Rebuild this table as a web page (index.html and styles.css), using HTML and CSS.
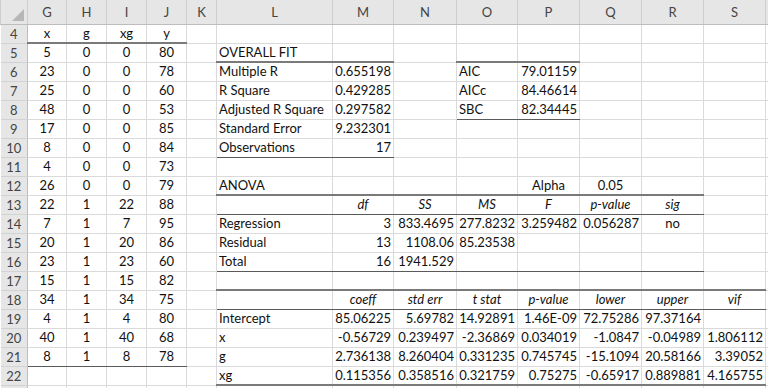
FILE: index.html
```html
<!DOCTYPE html>
<html>
<head>
<meta charset="utf-8">
<link rel="stylesheet" href="styles.css">
</head>
<body>
<table class="sheet">
<colgroup>
<col class="w-rh"><col class="w-g"><col class="w-h"><col class="w-i"><col class="w-j"><col class="w-k"><col class="w-l"><col class="w-m"><col class="w-n"><col class="w-o"><col class="w-p"><col class="w-q"><col class="w-r"><col class="w-s"><col class="w-t">
</colgroup>
<tr class="hdr">
<th class="corner"><span class="tri"></span></th><th>G</th><th>H</th><th>I</th><th>J</th><th>K</th><th>L</th><th>M</th><th>N</th><th>O</th><th>P</th><th>Q</th><th>R</th><th>S</th><th></th>
</tr>
<tr><th class="rh">4</th><td class="c tk">x</td><td class="c tk">g</td><td class="c tk">xg</td><td class="c tk">y</td><td></td><td></td><td></td><td></td><td></td><td></td><td></td><td></td><td></td><td></td></tr>
<tr><th class="rh">5</th><td class="c">5</td><td class="c">0</td><td class="c">0</td><td class="c">80</td><td></td><td class="l tk">OVERALL FIT</td><td class="tk"></td><td></td><td class="tk"></td><td class="tk"></td><td></td><td></td><td></td><td></td></tr>
<tr><th class="rh">6</th><td class="c">23</td><td class="c">0</td><td class="c">0</td><td class="c">78</td><td></td><td class="l">Multiple R</td><td class="r">0.655198</td><td></td><td class="l">AIC</td><td class="r">79.01159</td><td></td><td></td><td></td><td></td></tr>
<tr><th class="rh">7</th><td class="c">25</td><td class="c">0</td><td class="c">0</td><td class="c">60</td><td></td><td class="l">R Square</td><td class="r">0.429285</td><td></td><td class="l">AICc</td><td class="r">84.46614</td><td></td><td></td><td></td><td></td></tr>
<tr><th class="rh">8</th><td class="c">48</td><td class="c">0</td><td class="c">0</td><td class="c">53</td><td></td><td class="l">Adjusted R Square</td><td class="r">0.297582</td><td></td><td class="l tn">SBC</td><td class="r tn">82.34445</td><td></td><td></td><td></td><td></td></tr>
<tr><th class="rh">9</th><td class="c">17</td><td class="c">0</td><td class="c">0</td><td class="c">85</td><td></td><td class="l">Standard Error</td><td class="r">9.232301</td><td></td><td></td><td></td><td></td><td></td><td></td><td></td></tr>
<tr><th class="rh">10</th><td class="c">8</td><td class="c">0</td><td class="c">0</td><td class="c">84</td><td></td><td class="l tn">Observations</td><td class="r tn">17</td><td></td><td></td><td></td><td></td><td></td><td></td><td></td></tr>
<tr><th class="rh">11</th><td class="c">4</td><td class="c">0</td><td class="c">0</td><td class="c">73</td><td></td><td></td><td></td><td></td><td></td><td></td><td></td><td></td><td></td><td></td></tr>
<tr><th class="rh">12</th><td class="c">26</td><td class="c">0</td><td class="c">0</td><td class="c">79</td><td></td><td class="l tk">ANOVA</td><td class="tk"></td><td class="tk"></td><td class="tk"></td><td class="c tk">Alpha</td><td class="c tk">0.05</td><td class="tk"></td><td></td><td></td></tr>
<tr><th class="rh">13</th><td class="c">22</td><td class="c">1</td><td class="c">22</td><td class="c">88</td><td></td><td class="tn"></td><td class="c i tn">df</td><td class="c i tn">SS</td><td class="c i tn">MS</td><td class="c i tn">F</td><td class="c i tn">p-value</td><td class="c i tn">sig</td><td></td><td></td></tr>
<tr><th class="rh">14</th><td class="c">7</td><td class="c">1</td><td class="c">7</td><td class="c">95</td><td></td><td class="l">Regression</td><td class="r">3</td><td class="r">833.4695</td><td class="r">277.8232</td><td class="r">3.259482</td><td class="r">0.056287</td><td class="c">no</td><td></td><td></td></tr>
<tr><th class="rh">15</th><td class="c">20</td><td class="c">1</td><td class="c">20</td><td class="c">86</td><td></td><td class="l">Residual</td><td class="r">13</td><td class="r">1108.06</td><td class="r">85.23538</td><td></td><td></td><td></td><td></td><td></td></tr>
<tr><th class="rh">16</th><td class="c">23</td><td class="c">1</td><td class="c">23</td><td class="c">60</td><td></td><td class="l tn">Total</td><td class="r tn">16</td><td class="r tn">1941.529</td><td class="tn"></td><td class="tn"></td><td class="tn"></td><td class="tn"></td><td></td><td></td></tr>
<tr><th class="rh">17</th><td class="c">15</td><td class="c">1</td><td class="c">15</td><td class="c">82</td><td></td><td class="tk"></td><td class="tk"></td><td class="tk"></td><td class="tk"></td><td class="tk"></td><td class="tk"></td><td class="tk"></td><td class="tk"></td><td></td></tr>
<tr><th class="rh">18</th><td class="c">34</td><td class="c">1</td><td class="c">34</td><td class="c">75</td><td></td><td class="tn"></td><td class="c i tn">coeff</td><td class="c i tn">std err</td><td class="c i tn">t stat</td><td class="c i tn">p-value</td><td class="c i tn">lower</td><td class="c i tn">upper</td><td class="c i tn">vif</td><td></td></tr>
<tr><th class="rh">19</th><td class="c">4</td><td class="c">1</td><td class="c">4</td><td class="c">80</td><td></td><td class="l">Intercept</td><td class="r">85.06225</td><td class="r">5.69782</td><td class="r">14.92891</td><td class="r">1.46E-09</td><td class="r">72.75286</td><td class="r">97.37164</td><td></td><td></td></tr>
<tr><th class="rh">20</th><td class="c">40</td><td class="c">1</td><td class="c">40</td><td class="c">68</td><td></td><td class="l">x</td><td class="r">-0.56729</td><td class="r">0.239497</td><td class="r">-2.36869</td><td class="r">0.034019</td><td class="r">-1.0847</td><td class="r">-0.04989</td><td class="r">1.806112</td><td></td></tr>
<tr><th class="rh">21</th><td class="c tn">8</td><td class="c tn">1</td><td class="c tn">8</td><td class="c tn">78</td><td></td><td class="l">g</td><td class="r">2.736138</td><td class="r">8.260404</td><td class="r">0.331235</td><td class="r">0.745745</td><td class="r">-15.1094</td><td class="r">20.58166</td><td class="r">3.39052</td><td></td></tr>
<tr><th class="rh">22</th><td></td><td></td><td></td><td></td><td></td><td class="l tk">xg</td><td class="r tk">0.115356</td><td class="r tk">0.358516</td><td class="r tk">0.321759</td><td class="r tk">0.75275</td><td class="r tk">-0.65917</td><td class="r tk">0.889881</td><td class="r tk">4.165755</td><td></td></tr>
<tr><th class="rh"></th><td></td><td></td><td></td><td></td><td></td><td></td><td></td><td></td><td></td><td></td><td></td><td></td><td></td><td></td></tr>
</table>
</body>
</html>
```
FILE: styles.css
```css
html, body {
  margin: 0;
  padding: 0;
  background: #ffffff;
  overflow: hidden;
}

.sheet {
  border-collapse: collapse;
  table-layout: fixed;
  width: 780px;
  font-family: "Lato", "Open Sans", sans-serif;
  font-size: 13px;
  color: #111111;
}

.w-rh { width: 27px; }
.w-g { width: 39px; }
.w-h { width: 40px; }
.w-i { width: 40px; }
.w-j { width: 40px; }
.w-k { width: 30px; }
.w-l { width: 116px; }
.w-m { width: 61px; }
.w-n { width: 63px; }
.w-o { width: 61px; }
.w-p { width: 62px; }
.w-q { width: 62px; }
.w-r { width: 62px; }
.w-s { width: 62px; }
.w-t { width: 15px; }

.sheet tr {
  height: 19px;
}

.sheet td {
  padding: 0 2px;
  border: 1px solid #dadada;
  white-space: nowrap;
  overflow: hidden;
  vertical-align: middle;
  line-height: 17px;
}

.sheet tr.hdr {
  height: 24px;
}

.hdr th {
  background: #e6e6e6;
  color: #444444;
  font-weight: normal;
  font-size: 13px;
  border-left: 1px solid #cfcfcf;
  border-right: 1px solid #cfcfcf;
  border-bottom: 1px solid #bdbdbd;
  padding: 0;
  text-align: center;
}

.corner {
  position: relative;
}

.tri {
  position: absolute;
  right: 3px;
  bottom: 3px;
  width: 0;
  height: 0;
  border-left: 12px solid transparent;
  border-bottom: 12px solid #b7b7b7;
}

.rh {
  background: #e6e6e6;
  color: #444444;
  font-weight: normal;
  font-size: 13px;
  text-align: center;
  padding: 0;
  border-top: 1px solid #d2d2d2;
  border-bottom: 1px solid #d2d2d2;
  border-right: 1px solid #bdbdbd;
}

.c { text-align: center; }
.r { text-align: right; }
.l { text-align: left; }
.i { font-style: italic; }

.sheet td.tk {
  border-bottom: 2px solid #7a7a7a;
}

.sheet td.tn {
  border-bottom: 1px solid #5a5a5a;
}
```
